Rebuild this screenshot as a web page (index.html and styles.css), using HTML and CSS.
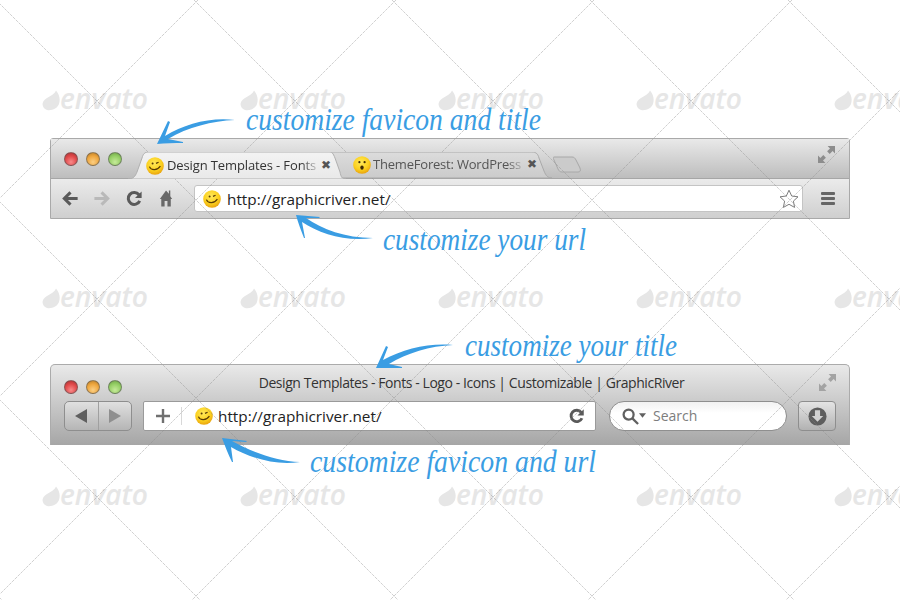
FILE: index.html
```html
<!DOCTYPE html>
<html lang="en">
<head>
<meta charset="utf-8">
<title>Browser templates</title>
<link rel="stylesheet" href="styles.css">
</head>
<body>
<svg class="defs" width="0" height="0" aria-hidden="true">
  <defs>
    <radialGradient id="smile-fill" cx="45%" cy="35%" r="70%">
      <stop offset="0" stop-color="#ffe95a"/>
      <stop offset="0.6" stop-color="#fbd01e"/>
      <stop offset="1" stop-color="#e59a0c"/>
    </radialGradient>
    <linearGradient id="tab-on" x1="0" y1="0" x2="0" y2="1">
      <stop offset="0" stop-color="#f3f3f3"/>
      <stop offset="1" stop-color="#e9e9e9"/>
    </linearGradient>
    <linearGradient id="tab-off" x1="0" y1="0" x2="0" y2="1">
      <stop offset="0" stop-color="#dcdcdc"/>
      <stop offset="1" stop-color="#cbcbcb"/>
    </linearGradient>
    <symbol id="smile" viewBox="0 0 18 18">
      <circle cx="9" cy="9" r="8.8" fill="url(#smile-fill)"/>
      <circle cx="6.6" cy="6.4" r="1" fill="#5a3c05"/>
      <path d="M10 6.400l2.600-1.100" stroke="#5a3c05" stroke-width="1.200" fill="none"/>
      <path d="M3.400 9.600c1.400 3.600 7.600 4.600 11-.4" stroke="#5a3c05" stroke-width="1.200" fill="none"/>
    </symbol>
    <symbol id="shock" viewBox="0 0 18 18">
      <circle cx="9" cy="9" r="8.800" fill="url(#smile-fill)"/>
      <circle cx="6.400" cy="6.200" r="1.100" fill="#3f2b05"/>
      <circle cx="11.600" cy="6.200" r="1.100" fill="#3f2b05"/>
      <ellipse cx="9" cy="11.600" rx="1.700" ry="2.200" fill="#3f2b05"/>
    </symbol>
    <symbol id="expand" viewBox="0 0 17 17">
      <path d="M17 0v7.400l-2.400-2.400-2.900 2.900-2.600-2.600 2.900-2.900L9.600 0zM0 17V9.600l2.400 2.400 2.900-2.900 2.600 2.600-2.900 2.900L7.400 17z"/>
    </symbol>
    <symbol id="leaf" viewBox="0 0 18 20">
      <path d="M14 0c3.500 4 4.500 9 3 13.500C15.500 18 9.500 20.500 5 19.500 .5 18 -1 13 2.500 9.500 6 6 12 5 14 0z"/>
    </symbol>
  </defs>
</svg>

<main class="page">
  <section class="chrome">
    <div class="tabstrip">
      <div class="lights">
        <span class="light light-red"></span>
        <span class="light light-amber"></span>
        <span class="light light-green"></span>
      </div>
      <div class="tab tab-active">
        <svg class="tab-shape" viewBox="0 0 218 27" preserveAspectRatio="none"><path d="M0 27C5 27 7 25 9 20L14 6C15 2 17 0 20 0H201C204 0 205 1 207 6L212 20C213 25 214 27 218 27Z"/></svg>
        <svg class="favicon"><use href="#smile"/></svg>
        <span class="tab-title">Design Templates - Fonts</span>
        <span class="tab-close">&#10006;</span>
      </div>
      <div class="tab tab-back">
        <svg class="tab-shape" viewBox="0 0 231 26" preserveAspectRatio="none"><path d="M0 26V0H211C215 0 217 2 218 6L223 19C225 24 227 26 231 26Z"/></svg>
        <svg class="favicon"><use href="#shock"/></svg>
        <span class="tab-title">ThemeForest: WordPress</span>
        <span class="tab-close">&#10006;</span>
      </div>
      <svg class="new-tab" viewBox="0 0 28 17"><path d="M1 1H19C21 1 22 2 23 4L27 12C28 15 27 16 25 16H9C7 16 6 15 5 13L1 4C0 2 0 1 1 1Z"/></svg>
      <svg class="expand"><use href="#expand"/></svg>
    </div>
    <div class="chrome-bar">
      <svg class="tool" viewBox="0 0 20 20"><path class="ico-line" d="M17.500 10H4M10 3.500L3.500 10l6.500 6.500"/></svg>
      <svg class="tool tool-off" viewBox="0 0 20 20"><path class="ico-line" d="M1.500 10H15M9 3.500l6.500 6.500-6.500 6.500"/></svg>
      <svg class="tool" viewBox="0 0 20 20"><path class="ico-line" d="M15.500 12.500a6.300 6.300 0 1 1-.8-6.500"/><path class="ico-fill" d="M17.500 2.500v7h-7z"/></svg>
      <svg class="tool" viewBox="0 0 20 20"><path class="ico-house" d="M9.500 1.500L3 10.500h1.500V18.500h3.500v-6h3v6h3.500V10.500H16l-2-3V1.500h-1.500v3.500z"/></svg>
      <div class="chrome-address">
        <svg class="favicon"><use href="#smile"/></svg>
        <span class="url">http://graphicriver.net/</span>
        <svg class="star" viewBox="0 0 20 20"><path d="M10 1.200l2.700 5.800 6.300.8-4.600 4.300 1.200 6.300L10 15.300l-5.600 3.100 1.200-6.300L1 7.800l6.300-.8z"/></svg>
      </div>
      <div class="menu"><span></span><span></span><span></span></div>
    </div>
  </section>

  <section class="safari">
    <div class="titlebar">
      <div class="lights">
        <span class="light light-red"></span>
        <span class="light light-amber"></span>
        <span class="light light-green"></span>
      </div>
      <div class="window-title">Design Templates - Fonts - Logo - Icons | Customizable | GraphicRiver</div>
      <svg class="expand expand-light"><use href="#expand"/></svg>
    </div>
    <div class="safari-bar">
      <div class="nav-pair">
        <div class="nav-btn"><svg viewBox="0 0 12 14"><path class="tri-dark" d="M12 0v14L0 7z"/></svg></div>
        <div class="nav-btn"><svg viewBox="0 0 12 14"><path class="tri-light" d="M0 0v14l12-7z"/></svg></div>
      </div>
      <div class="safari-address">
        <svg class="plus" viewBox="0 0 14 14"><path d="M5.800 0h2.400v5.800H14v2.400H8.200V14H5.800V8.200H0V5.800h5.800z"/></svg>
        <span class="divider"></span>
        <svg class="favicon"><use href="#smile"/></svg>
        <span class="url url-small">http://graphicriver.net/</span>
        <svg class="reload" viewBox="0 0 20 20"><path class="ico-line" d="M15.500 12.500a6.300 6.300 0 1 1-.8-6.500"/><path class="ico-fill" d="M17.500 2.500v7h-7z"/></svg>
      </div>
      <div class="search">
        <svg class="magnifier" viewBox="0 0 18 18"><circle cx="7" cy="7" r="5.300"/><path d="M11 11l6 6"/></svg>
        <svg class="caret" viewBox="0 0 8 5"><path d="M0 0h8L4 5z"/></svg>
        <span class="search-label">Search</span>
      </div>
      <div class="download">
        <svg viewBox="0 0 20 20"><circle cx="10" cy="10" r="9.500"/><path d="M7.300 3.500h5.400v6H16l-6 6-6-6h3.300z"/></svg>
      </div>
    </div>
  </section>

  <svg class="overlay" viewBox="0 0 900 600">
    <g class="wm">
      <g transform="translate(42 90)"><use href="#leaf" width="18" height="21"/><text x="18" y="19" textLength="88" lengthAdjust="spacingAndGlyphs">envato</text></g>
      <g transform="translate(240 90)"><use href="#leaf" width="18" height="21"/><text x="18" y="19" textLength="88" lengthAdjust="spacingAndGlyphs">envato</text></g>
      <g transform="translate(438 90)"><use href="#leaf" width="18" height="21"/><text x="18" y="19" textLength="88" lengthAdjust="spacingAndGlyphs">envato</text></g>
      <g transform="translate(636 90)"><use href="#leaf" width="18" height="21"/><text x="18" y="19" textLength="88" lengthAdjust="spacingAndGlyphs">envato</text></g>
      <g transform="translate(834 90)"><use href="#leaf" width="18" height="21"/><text x="18" y="19" textLength="88" lengthAdjust="spacingAndGlyphs">envato</text></g>
      <g transform="translate(42 288)"><use href="#leaf" width="18" height="21"/><text x="18" y="19" textLength="88" lengthAdjust="spacingAndGlyphs">envato</text></g>
      <g transform="translate(240 288)"><use href="#leaf" width="18" height="21"/><text x="18" y="19" textLength="88" lengthAdjust="spacingAndGlyphs">envato</text></g>
      <g transform="translate(438 288)"><use href="#leaf" width="18" height="21"/><text x="18" y="19" textLength="88" lengthAdjust="spacingAndGlyphs">envato</text></g>
      <g transform="translate(636 288)"><use href="#leaf" width="18" height="21"/><text x="18" y="19" textLength="88" lengthAdjust="spacingAndGlyphs">envato</text></g>
      <g transform="translate(834 288)"><use href="#leaf" width="18" height="21"/><text x="18" y="19" textLength="88" lengthAdjust="spacingAndGlyphs">envato</text></g>
      <g transform="translate(42 486)"><use href="#leaf" width="18" height="21"/><text x="18" y="19" textLength="88" lengthAdjust="spacingAndGlyphs">envato</text></g>
      <g transform="translate(240 486)"><use href="#leaf" width="18" height="21"/><text x="18" y="19" textLength="88" lengthAdjust="spacingAndGlyphs">envato</text></g>
      <g transform="translate(438 486)"><use href="#leaf" width="18" height="21"/><text x="18" y="19" textLength="88" lengthAdjust="spacingAndGlyphs">envato</text></g>
      <g transform="translate(636 486)"><use href="#leaf" width="18" height="21"/><text x="18" y="19" textLength="88" lengthAdjust="spacingAndGlyphs">envato</text></g>
      <g transform="translate(834 486)"><use href="#leaf" width="18" height="21"/><text x="18" y="19" textLength="88" lengthAdjust="spacingAndGlyphs">envato</text></g>
    </g>
    <path class="lattice" d="M-4 0L604 608M194 0L802 608M392 0L1000 608M590 0L1198 608M788 0L1396 608M-202 0L406 608M-400 0L208 608M-598 0L10 608M198 0L-410 608M396 0L-212 608M594 0L-14 608M792 0L184 608M990 0L382 608M1188 0L580 608M1386 0L778 608M1584 0L976 608"/>
    <g class="swoosh">
      <path d="M157 144L168 121L170 122L165 136C185 124 210 117 235 120C212 121 188 127 168 139L183 142L183 143C174 143 165 143 157 144Z"/>
      <path d="M296 215C304 216 312 216 320 217L319 218L306 218C322 229 345 238 373 238C346 242 320 234 302 222L305 238L304 238C301 230 298 223 296 215Z"/>
      <path d="M376 368L386 346L388 347L383 360C404 349 428 343 453 345C430 346 407 353 389 364L402 367L402 368C393 368 385 368 376 368Z"/>
      <path d="M222 438C230 439 239 440 247 441L246 442L232 441C252 452 276 461 300 462C276 466 250 458 231 447L233 462L232 462C228 454 225 446 222 438Z"/>
    </g>
    <g class="hand">
      <text x="246" y="130" textLength="295" lengthAdjust="spacingAndGlyphs">customize favicon and title</text>
      <text x="383" y="250" textLength="203" lengthAdjust="spacingAndGlyphs">customize your url</text>
      <text x="465" y="356" textLength="212" lengthAdjust="spacingAndGlyphs">customize your title</text>
      <text x="310" y="472" textLength="286" lengthAdjust="spacingAndGlyphs">customize favicon and url</text>
    </g>
  </svg>
</main>
</body>
</html>
```

FILE: styles.css
```css
* { box-sizing: border-box; }

html, body { margin: 0; background: #fff; }

.defs { position: absolute; }

.page {
  position: relative;
  width: 900px;
  height: 600px;
  padding: 138px 50px 0;
  overflow: hidden;
  font-family: "Open Sans", "Liberation Sans", sans-serif;
  color: #333;
}

/* shared bits */
.lights { display: flex; gap: 8px; flex: none; }
.light {
  width: 14px;
  height: 14px;
  border-radius: 50%;
  border: 1px solid rgba(90, 90, 90, .6);
}
.light-red { background: radial-gradient(circle at 50% 75%, #f98a8a, #e0494a 55%, #a62e30); }
.light-amber { background: radial-gradient(circle at 50% 75%, #fbcf84, #eea63e 55%, #b57a25); }
.light-green { background: radial-gradient(circle at 50% 75%, #c6ea9a, #95cf65 55%, #6a9f43); }

.favicon { width: 18px; height: 18px; flex: none; }
.expand { width: 17px; height: 17px; flex: none; fill: #8d8d8d; }
.expand-light { fill: #a3a3a3; }
.ico-line { fill: none; stroke: #5a5a5a; stroke-width: 3.2; }
.ico-fill { fill: #5a5a5a; }
.ico-house { fill: #686868; }

/* first window */
.chrome {
  height: 81px;
  border: 1px solid #a9a9a9;
  border-radius: 3px 3px 0 0;
  margin-bottom: 145px;
}
.tabstrip {
  position: relative;
  display: flex;
  align-items: flex-end;
  height: 40px;
  padding-left: 13px;
  border-bottom: 1px solid #a6a6a6;
  background: linear-gradient(#e9e9e9, #bdbdbd);
}
.tabstrip > .lights { align-self: flex-start; margin-top: 13px; }
.tab {
  position: relative;
  display: flex;
  align-items: center;
  height: 27px;
  font-size: 13px;
  letter-spacing: -.12px;
}
.tab-shape { position: absolute; left: 0; top: 0; width: 100%; height: 100%; }
.tab-active {
  width: 218px;
  margin-left: 6px;
  margin-bottom: -1px;
  padding-left: 18px;
  z-index: 2;
  color: #333;
}
.tab-active .tab-shape path { fill: url(#tab-on); stroke: #b0b0b0; }
.tab-back {
  width: 231px;
  height: 26px;
  margin-left: -25px;
  padding-left: 32px;
  z-index: 1;
  color: #555;
  letter-spacing: -.2px;
}
.tab-back .tab-shape path { fill: url(#tab-off); stroke: #a9a9a9; }
.tab .favicon, .tab-title, .tab-close { position: relative; }
.tab-title {
  width: 149px;
  margin: 0 0 2px 3px;
  white-space: nowrap;
  -webkit-mask-image: linear-gradient(90deg, #000 90%, rgba(0,0,0,.25));
  mask-image: linear-gradient(90deg, #000 90%, rgba(0,0,0,.25));
}
.tab-back .tab-title { margin-left: 2px; }
.tab-close { margin: 0 0 2px 5px; font-size: 12px; color: #555; font-family: "DejaVu Sans", sans-serif; }
.new-tab {
  width: 28px;
  height: 17px;
  margin: 0 0 5px 1px;
  fill: #cbcbcb;
  stroke: #a8a8a8;
}
.tabstrip > .expand { margin: 0 14px 15px auto; }

.chrome-bar {
  display: flex;
  align-items: center;
  height: 39px;
  padding: 0 13px 0 10px;
  background: linear-gradient(#ebebeb, #cfcfcf);
}
.tool { width: 19px; height: 19px; margin-right: 13px; flex: none; }
.tool-off .ico-line { stroke: #b9b9b9; }
.chrome-address {
  display: flex;
  align-items: center;
  flex: none;
  width: 609px;
  height: 27px;
  margin-left: 5px;
  padding: 0 3px 0 8px;
  background: #fff;
  border: 1px solid #c4c4c4;
  border-radius: 3px;
}
.url { margin-left: 6px; font-size: 15.300px; color: #222; white-space: nowrap; }
.star {
  width: 20px;
  height: 20px;
  margin-left: auto;
  fill: #fff;
  stroke: #7c7c7c;
}
.menu {
  display: flex;
  flex-direction: column;
  gap: 2px;
  margin-left: 18px;
}
.menu span { width: 14px; height: 3px; border-radius: 1px; background: #666; }

/* second window */
.safari {
  height: 81px;
  border: 1px solid #ababab;
  border-bottom: 0;
  border-radius: 5px 5px 0 0;
  background: linear-gradient(#e9e9e9, #a6a6a6);
}
.titlebar {
  display: flex;
  align-items: center;
  height: 36px;
  padding: 0 13px;
}
.titlebar .lights { margin-top: 8px; }
.window-title {
  flex: 1;
  margin: 0 4px 2px 6px;
  text-align: center;
  font-size: 14px;
  letter-spacing: -.43px;
  color: #333;
  white-space: nowrap;
}
.titlebar .expand { margin-bottom: 2px; }
.safari-bar {
  display: flex;
  align-items: center;
  gap: 11px;
  height: 30px;
  padding: 0 13px;
}
.nav-pair {
  display: flex;
  width: 68px;
  height: 30px;
  flex: none;
  border: 1px solid #8e8e8e;
  border-radius: 5px;
  background: linear-gradient(#e0e0e0, #b5b5b5);
}
.nav-btn {
  flex: 1;
  display: flex;
  align-items: center;
  justify-content: center;
}
.nav-btn + .nav-btn { border-left: 1px solid #a0a0a0; }
.nav-btn svg { width: 12px; height: 14px; }
.tri-dark { fill: #5f5f5f; }
.tri-light { fill: #8f8f8f; }
.safari-address {
  display: flex;
  align-items: center;
  flex: none;
  width: 453px;
  height: 30px;
  padding: 0 9px 0 12px;
  background: #fff;
  border: 1px solid #9a9a9a;
  border-radius: 2px;
}
.plus { width: 14px; height: 14px; fill: #707070; flex: none; }
.divider { width: 1px; height: 18px; margin: 0 13px 0 11px; background: #d8d8d8; }
.url-small { margin-left: 5px; }
.reload { width: 18px; height: 18px; margin-left: auto; }
.search {
  display: flex;
  align-items: center;
  flex: none;
  width: 178px;
  height: 30px;
  margin-left: 2px;
  padding-left: 12px;
  background: linear-gradient(#f2f2f2, #fff 40%);
  border: 1px solid #8f8f8f;
  border-radius: 15px;
}
.magnifier { width: 17px; height: 17px; fill: none; stroke: #606060; stroke-width: 2.400; flex: none; }
.caret { width: 7px; height: 5px; margin-bottom: 2px; fill: #606060; flex: none; }
.search-label { margin: 0 0 2px 7px; font-size: 14px; color: #7d7d7d; }
.download {
  display: flex;
  align-items: center;
  justify-content: center;
  flex: none;
  width: 38px;
  height: 30px;
  border: 1px solid #8e8e8e;
  border-radius: 4px;
  background: linear-gradient(#e4e4e4, #b2b2b2);
}
.download svg { width: 19px; height: 19px; }
.download circle { fill: #5e5e5e; }
.download path { fill: #d2d2d2; }

/* annotation layer over the page */
.overlay {
  position: absolute;
  left: 0;
  top: 0;
  width: 900px;
  height: 600px;
  pointer-events: none;
}
.wm { fill: #e6e6e6; }
.wm text { font-family: "Open Sans", sans-serif; font-style: italic; font-weight: 600; font-size: 28px; }
.lattice { fill: none; stroke: #8a8a8a; stroke-opacity: .4; stroke-width: 1; stroke-dasharray: 3 1; }
.swoosh { fill: #3a9de3; }
.hand {
  fill: #3a9de3;
  font-family: "Liberation Serif", serif;
  font-style: italic;
  font-size: 32px;
}
```
